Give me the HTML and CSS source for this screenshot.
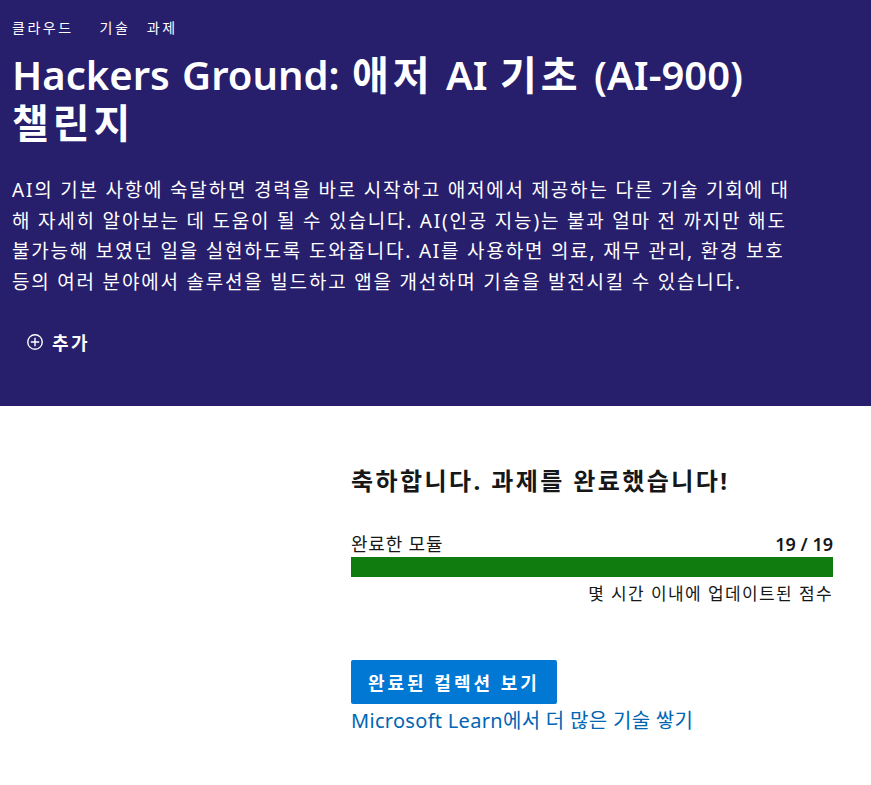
FILE: index.html
```html
<!DOCTYPE html>
<html lang="ko">
<head>
<meta charset="utf-8">
<title>Hackers Ground: 애저 AI 기초 (AI-900) 챌린지</title>
<link rel="stylesheet" href="styles.css">
</head>
<body>
<header class="hero">
  <div class="kicker"><span class="kw kw-1">클라우드</span><span class="kw kw-2">기술</span><span class="kw">과제</span></div>
  <h1 class="title"><span class="line line-1">Hackers Ground: <span class="ko">애저</span> AI <span class="ko">기초</span> (AI-900)</span><span class="line line-2 ko">챌린지</span></h1>
  <p class="summary">AI의 기본 사항에 숙달하면 경력을 바로 시작하고 애저에서 제공하는 다른 기술 기회에 대해 자세히 알아보는 데 도움이 될 수 있습니다. AI(인공 지능)는 불과 얼마 전 까지만 해도 불가능해 보였던 일을 실현하도록 도와줍니다. AI를 사용하면 의료, 재무 관리, 환경 보호 등의 여러 분야에서 솔루션을 빌드하고 앱을 개선하며 기술을 발전시킬 수 있습니다.</p>
  <button class="add-btn" type="button">
    <svg class="add-icon" width="16" height="16" viewBox="0 0 16 16" aria-hidden="true"><circle cx="8" cy="8" r="7.25" fill="none" stroke="#fff" stroke-width="1.4"/><path d="M8 3.8v8.4M3.8 8h8.4" stroke="#fff" stroke-width="1.4"/></svg>
    <span>추가</span>
  </button>
</header>
<main class="content">
  <div class="spacer"></div>
  <section class="status">
    <h2 class="congrats">축하합니다. 과제를 완료했습니다!</h2>
    <div class="progress-head">
      <span class="progress-label">완료한 모듈</span>
      <span class="progress-count">19 / 19</span>
    </div>
    <div class="bar"><div class="bar-fill" style="width:100%"></div></div>
    <div class="updated">몇 시간 이내에 업데이트된 점수</div>
    <a class="primary-btn" href="#">완료된 컬렉션 보기</a>
    <a class="learn-link" href="#">Microsoft Learn에서 더 많은 기술 쌓기</a>
  </section>
</main>
</body>
</html>
```
FILE: styles.css
```css
* { box-sizing: border-box; }
html, body { margin: 0; padding: 0; background: #fff; }
body {
  font-family: "Noto Sans", "Noto Sans CJK KR", sans-serif;
  color: #171717;
}
.hero {
  background: #271e6c;
  color: #fff;
  padding: 17px 12px 46px 12px;
}
.kicker {
  display: flex;
  font-size: 14px;
  line-height: 20px;
  letter-spacing: 2.5px;
  font-family: "Noto Sans CJK KR", sans-serif;
  font-weight: 400;
}
.kw-1 { margin-right: 26px; }
.kw-2 { margin-right: 16.5px; }
.title {
  margin: 14px 0 0 0;
  font-size: 40px;
  line-height: 47px;
  font-weight: 600;
  word-spacing: 2px;
}
.title .line { display: block; }
.title .line-2 { font-family: "Noto Sans CJK KR", sans-serif; }
.title .ko { letter-spacing: 4px; }
.summary {
  margin: 30px 0 0 0;
  max-width: 792px;
  font-size: 19px;
  line-height: 30.6px;
  letter-spacing: 1.8px;
}
.add-btn {
  margin-top: 27px;
  display: flex;
  align-items: center;
  gap: 9px;
  height: 36px;
  padding: 0 15px;
  background: transparent;
  border: 0;
  color: #fff;
  font-family: inherit;
  font-size: 18px;
  letter-spacing: 2.5px;
  font-weight: 700;
}
.content {
  display: grid;
  grid-template-columns: 1fr 482px;
  padding: 0 38px 40px 12px;
}
.status {
  padding-top: 60px;
  display: flex;
  flex-direction: column;
}
.congrats {
  margin: 0;
  font-size: 24px;
  line-height: 30px;
  letter-spacing: 2.4px;
  font-weight: 700;
}
.progress-head {
  margin-top: 35px;
  display: flex;
  justify-content: space-between;
  align-items: baseline;
  font-size: 18px;
  line-height: 26px;
}
.progress-label { letter-spacing: 0.8px; }
.progress-count { font-weight: 600; }
.bar {
  height: 20px;
  background: #e6e6e6;
}
.bar-fill {
  height: 100%;
  background: #107c10;
}
.updated {
  text-align: right;
  font-size: 17px;
  line-height: 24px;
  letter-spacing: 1.4px;
  margin-top: 5px;
}
.primary-btn {
  margin-top: 54px;
  align-self: flex-start;
  display: flex;
  align-items: center;
  height: 44px;
  padding: 0 17px;
  background: #0078d4;
  color: #fff;
  border-radius: 2px;
  text-decoration: none;
  font-size: 18px;
  letter-spacing: 3px;
  font-weight: 700;
}
.learn-link {
  margin-top: 3px;
  color: #0065b3;
  text-decoration: none;
  font-size: 20px;
  line-height: 28px;
  letter-spacing: 0.3px;
  align-self: flex-start;
}
```
